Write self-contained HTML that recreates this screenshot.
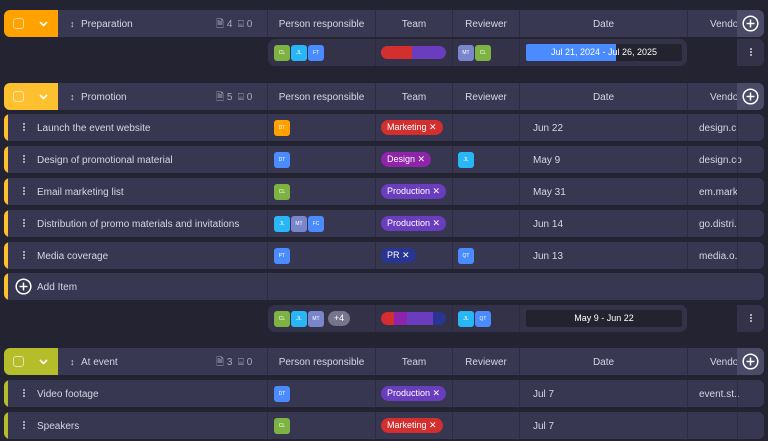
<!DOCTYPE html>
<html><head><meta charset="utf-8"><style>
*{box-sizing:border-box;margin:0;padding:0}
body{width:768px;height:441px;background:#242332;font-family:"Liberation Sans",sans-serif;color:#d6d5e4;position:relative;overflow:hidden;font-size:10px}
.a{position:absolute}
.row{position:absolute;left:4px;width:760px;height:27px;background:#383752;border-radius:6px;overflow:hidden}
.hdr{background:#393853}
.sep{position:absolute;top:0;bottom:0;width:1px;background:#2c2b40}
.t{position:absolute;top:1px;line-height:27px;white-space:nowrap}
.c{text-align:center}
.av{position:absolute;width:16px;height:16px;border-radius:3px;font-size:5px;color:#fff;text-align:center;line-height:16px;top:6px}
.tag{position:absolute;top:6px;height:15px;border-radius:8px;color:#fff;font-size:9px;line-height:15px;padding:0 6px}
.stripe{position:absolute;left:0;top:0;bottom:0;width:4px}
.keb{position:absolute;width:2px;height:2px;background:#cfcde0;border-radius:1px;box-shadow:0 3px 0 #cfcde0,0 6px 0 #cfcde0}
.gh{position:absolute;left:0;top:0;width:54px;height:27px}
.cb{position:absolute;left:9px;top:8px;width:11px;height:11px;border:1.5px solid rgba(255,255,255,.6);border-radius:3px}
.plusbox{position:absolute;left:733px;top:0;width:27px;height:27px;background:#4b4a67}
.sum{position:absolute;left:268px;width:419px;height:27px;background:#333249;border-radius:7px}
.kb2{position:absolute;left:737px;width:27px;height:27px;background:#333249;border-radius:0 6px 6px 0}
svg{position:absolute}
</style></head><body>

<!-- Preparation header -->
<div class="row hdr" style="top:10px">
 <div class="gh" style="background:#ffa200"><div class="cb"></div><svg style="left:35px;top:11px" width="9" height="6" viewBox="0 0 9 6"><path d="M1 1L4.5 4.5L8 1" stroke="#fff" stroke-width="1.6" fill="none"/></svg></div>
 <div class="t" style="left:66px;font-size:9px">↕</div>
 <div class="t" style="left:77px">Preparation</div>
 <div class="t" style="left:212px;color:#a9a8be">🗎 4 &nbsp;⌸ 0</div>
 <div class="sep" style="left:263px"></div><div class="t c" style="left:264px;width:107px">Person responsible</div>
 <div class="sep" style="left:371px"></div><div class="t c" style="left:372px;width:76px">Team</div>
 <div class="sep" style="left:448px"></div><div class="t c" style="left:449px;width:66px">Reviewer</div>
 <div class="sep" style="left:515px"></div><div class="t c" style="left:516px;width:167px">Date</div>
 <div class="sep" style="left:683px"></div><div class="t" style="left:706px">Vendor</div>
 <div class="plusbox"><svg style="left:5px;top:5px" width="17" height="17" viewBox="0 0 17 17"><circle cx="8.5" cy="8.5" r="7.3" stroke="#fff" stroke-width="1.5" fill="none"/><path d="M8.5 4.5v8M4.5 8.5h8" stroke="#fff" stroke-width="1.5"/></svg></div>
</div>
<div class="sum" style="top:39px"></div>
<div class="a" style="left:268px;top:39px;width:419px;height:27px">
 <div class="av" style="left:6px;background:#7cb342">CL</div><div class="av" style="left:23px;background:#29b6f6">JL</div><div class="av" style="left:40px;background:#4a8cff">FT</div>
 <div class="sep" style="left:107px"></div>
 <div class="a" style="left:113px;top:7px;width:65px;height:13px;border-radius:7px;overflow:hidden;background:#6a3dbf"><div style="width:31px;height:13px;background:#d32f2f"></div></div>
 <div class="sep" style="left:184px"></div>
 <div class="av" style="left:190px;background:#7986cb">MT</div><div class="av" style="left:207px;background:#7cb342">CL</div>
 <div class="sep" style="left:251px"></div>
 <div class="a" style="left:258px;top:5px;width:156px;height:17px;background:#23222f;border-radius:2px;overflow:hidden"><div style="width:90px;height:17px;background:#4a8cff"></div><div class="a" style="left:0;top:0;width:156px;text-align:center;line-height:17px;color:#fff;font-size:9px">Jul 21, 2024 - Jul 26, 2025</div></div>
</div>
<div class="kb2" style="top:39px"><div class="keb" style="left:13px;top:9px"></div></div>

<!-- Promotion header -->
<div class="row hdr" style="top:83px">
 <div class="gh" style="background:#fdc02f"><div class="cb"></div><svg style="left:35px;top:11px" width="9" height="6" viewBox="0 0 9 6"><path d="M1 1L4.5 4.5L8 1" stroke="#fff" stroke-width="1.6" fill="none"/></svg></div>
 <div class="t" style="left:66px;font-size:9px">↕</div>
 <div class="t" style="left:77px">Promotion</div>
 <div class="t" style="left:212px;color:#a9a8be">🗎 5 &nbsp;⌸ 0</div>
 <div class="sep" style="left:263px"></div><div class="t c" style="left:264px;width:107px">Person responsible</div>
 <div class="sep" style="left:371px"></div><div class="t c" style="left:372px;width:76px">Team</div>
 <div class="sep" style="left:448px"></div><div class="t c" style="left:449px;width:66px">Reviewer</div>
 <div class="sep" style="left:515px"></div><div class="t c" style="left:516px;width:167px">Date</div>
 <div class="sep" style="left:683px"></div><div class="t" style="left:706px">Vendor</div>
 <div class="plusbox"><svg style="left:5px;top:5px" width="17" height="17" viewBox="0 0 17 17"><circle cx="8.5" cy="8.5" r="7.3" stroke="#fff" stroke-width="1.5" fill="none"/><path d="M8.5 4.5v8M4.5 8.5h8" stroke="#fff" stroke-width="1.5"/></svg></div>
</div>

<!-- item rows -->
<div class="row" style="top:114px"><div class="stripe" style="background:#fdc02f"></div><div class="keb" style="left:19px;top:9px"></div><div class="t" style="left:33px">Launch the event website</div>
 <div class="sep" style="left:263px"></div><div class="av" style="left:270px;background:#ffa200">DT</div>
 <div class="sep" style="left:371px"></div><div class="tag" style="left:377px;background:#d32f2f">Marketing ✕</div>
 <div class="sep" style="left:448px"></div><div class="sep" style="left:515px"></div><div class="t" style="left:529px">Jun 22</div>
 <div class="sep" style="left:683px"></div><div class="t" style="left:695px">design.c.</div><div class="sep" style="left:733px"></div></div>

<div class="row" style="top:146px"><div class="stripe" style="background:#fdc02f"></div><div class="keb" style="left:19px;top:9px"></div><div class="t" style="left:33px">Design of promotional material</div>
 <div class="sep" style="left:263px"></div><div class="av" style="left:270px;background:#4a8cff">DT</div>
 <div class="sep" style="left:371px"></div><div class="tag" style="left:377px;background:#8e24aa">Design ✕</div>
 <div class="sep" style="left:448px"></div><div class="av" style="left:454px;background:#29b6f6">JL</div><div class="sep" style="left:515px"></div><div class="t" style="left:529px">May 9</div>
 <div class="sep" style="left:683px"></div><div class="t" style="left:695px">design.co</div><div class="sep" style="left:733px"></div></div>

<div class="row" style="top:178px"><div class="stripe" style="background:#fdc02f"></div><div class="keb" style="left:19px;top:9px"></div><div class="t" style="left:33px">Email marketing list</div>
 <div class="sep" style="left:263px"></div><div class="av" style="left:270px;background:#7cb342">CL</div>
 <div class="sep" style="left:371px"></div><div class="tag" style="left:377px;background:#6a3dbf">Production ✕</div>
 <div class="sep" style="left:448px"></div><div class="sep" style="left:515px"></div><div class="t" style="left:529px">May 31</div>
 <div class="sep" style="left:683px"></div><div class="t" style="left:695px">em.mark</div><div class="sep" style="left:733px"></div></div>

<div class="row" style="top:210px"><div class="stripe" style="background:#fdc02f"></div><div class="keb" style="left:19px;top:9px"></div><div class="t" style="left:33px">Distribution of promo materials and invitations</div>
 <div class="sep" style="left:263px"></div><div class="av" style="left:270px;background:#29b6f6">JL</div><div class="av" style="left:287px;background:#7986cb">MT</div><div class="av" style="left:304px;background:#4a8cff">FC</div>
 <div class="sep" style="left:371px"></div><div class="tag" style="left:377px;background:#6a3dbf">Production ✕</div>
 <div class="sep" style="left:448px"></div><div class="sep" style="left:515px"></div><div class="t" style="left:529px">Jun 14</div>
 <div class="sep" style="left:683px"></div><div class="t" style="left:695px">go.distri.</div><div class="sep" style="left:733px"></div></div>

<div class="row" style="top:242px"><div class="stripe" style="background:#fdc02f"></div><div class="keb" style="left:19px;top:9px"></div><div class="t" style="left:33px">Media coverage</div>
 <div class="sep" style="left:263px"></div><div class="av" style="left:270px;background:#4a8cff">PT</div>
 <div class="sep" style="left:371px"></div><div class="tag" style="left:377px;background:#283593">PR ✕</div>
 <div class="sep" style="left:448px"></div><div class="av" style="left:454px;background:#4a8cff">QT</div><div class="sep" style="left:515px"></div><div class="t" style="left:529px">Jun 13</div>
 <div class="sep" style="left:683px"></div><div class="t" style="left:695px">media.o.</div><div class="sep" style="left:733px"></div></div>

<div class="row" style="top:273px"><div class="stripe" style="background:#fdc02f"></div><svg style="left:11px;top:5px" width="17" height="17" viewBox="0 0 17 17"><circle cx="8.5" cy="8.5" r="7.3" stroke="#fff" stroke-width="1.5" fill="none"/><path d="M8.5 4.5v8M4.5 8.5h8" stroke="#fff" stroke-width="1.5"/></svg><div class="t" style="left:33px">Add Item</div>
 <div class="sep" style="left:263px"></div></div>

<div class="sum" style="top:305px"></div>
<div class="a" style="left:268px;top:305px;width:419px;height:27px">
 <div class="av" style="left:6px;background:#7cb342">CL</div><div class="av" style="left:23px;background:#29b6f6">JL</div><div class="av" style="left:40px;background:#7986cb">MT</div>
 <div class="a" style="left:60px;top:6px;width:22px;height:15px;border-radius:8px;background:#76758c;color:#fff;font-size:9px;text-align:center;line-height:15px">+4</div>
 <div class="sep" style="left:107px"></div>
 <div class="a" style="left:113px;top:7px;width:65px;height:13px;border-radius:7px;overflow:hidden;display:flex"><div style="width:13px;background:#d32f2f"></div><div style="width:13px;background:#8e24aa"></div><div style="width:26px;background:#6a3dbf"></div><div style="width:13px;background:#283593"></div></div>
 <div class="sep" style="left:184px"></div>
 <div class="av" style="left:190px;background:#29b6f6">JL</div><div class="av" style="left:207px;background:#4a8cff">QT</div>
 <div class="sep" style="left:251px"></div>
 <div class="a" style="left:258px;top:5px;width:156px;height:17px;background:#23222f;border-radius:2px;text-align:center;line-height:17px;color:#fff;font-size:9px">May 9 - Jun 22</div>
</div>
<div class="kb2" style="top:305px"><div class="keb" style="left:13px;top:9px"></div></div>

<!-- At event -->
<div class="row hdr" style="top:348px">
 <div class="gh" style="background:#b5bd2b"><div class="cb"></div><svg style="left:35px;top:11px" width="9" height="6" viewBox="0 0 9 6"><path d="M1 1L4.5 4.5L8 1" stroke="#fff" stroke-width="1.6" fill="none"/></svg></div>
 <div class="t" style="left:66px;font-size:9px">↕</div>
 <div class="t" style="left:77px">At event</div>
 <div class="t" style="left:212px;color:#a9a8be">🗎 3 &nbsp;⌸ 0</div>
 <div class="sep" style="left:263px"></div><div class="t c" style="left:264px;width:107px">Person responsible</div>
 <div class="sep" style="left:371px"></div><div class="t c" style="left:372px;width:76px">Team</div>
 <div class="sep" style="left:448px"></div><div class="t c" style="left:449px;width:66px">Reviewer</div>
 <div class="sep" style="left:515px"></div><div class="t c" style="left:516px;width:167px">Date</div>
 <div class="sep" style="left:683px"></div><div class="t" style="left:706px">Vendor</div>
 <div class="plusbox"><svg style="left:5px;top:5px" width="17" height="17" viewBox="0 0 17 17"><circle cx="8.5" cy="8.5" r="7.3" stroke="#fff" stroke-width="1.5" fill="none"/><path d="M8.5 4.5v8M4.5 8.5h8" stroke="#fff" stroke-width="1.5"/></svg></div>
</div>

<div class="row" style="top:380px"><div class="stripe" style="background:#b5bd2b"></div><div class="keb" style="left:19px;top:9px"></div><div class="t" style="left:33px">Video footage</div>
 <div class="sep" style="left:263px"></div><div class="av" style="left:270px;background:#4a8cff">DT</div>
 <div class="sep" style="left:371px"></div><div class="tag" style="left:377px;background:#6a3dbf">Production ✕</div>
 <div class="sep" style="left:448px"></div><div class="sep" style="left:515px"></div><div class="t" style="left:529px">Jul 7</div>
 <div class="sep" style="left:683px"></div><div class="t" style="left:695px">event.st..</div><div class="sep" style="left:733px"></div></div>

<div class="row" style="top:412px"><div class="stripe" style="background:#b5bd2b"></div><div class="keb" style="left:19px;top:9px"></div><div class="t" style="left:33px">Speakers</div>
 <div class="sep" style="left:263px"></div><div class="av" style="left:270px;background:#7cb342">CL</div>
 <div class="sep" style="left:371px"></div><div class="tag" style="left:377px;background:#d32f2f">Marketing ✕</div>
 <div class="sep" style="left:448px"></div><div class="sep" style="left:515px"></div><div class="t" style="left:529px">Jul 7</div>
 <div class="sep" style="left:683px"></div><div class="sep" style="left:733px"></div></div>

</body></html>
